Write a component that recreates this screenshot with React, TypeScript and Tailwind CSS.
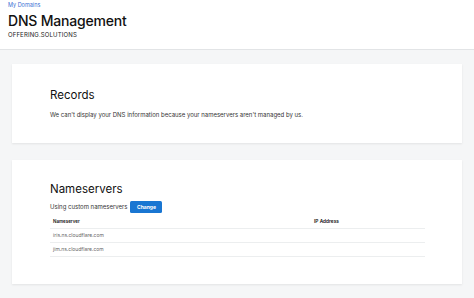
import React from "react";

export default function App() {
  return (
    <div className="min-h-[298px] bg-[#f5f6f7] font-['Inter',sans-serif] text-[#111]">
      <header className="h-[50px] bg-white pl-[8px] pt-[2px] border-b border-[#e2e4e6]">
        <div className="text-[5.5px] leading-[7px] text-[#3b6fd4]">My Domains</div>
        <h1 className="text-[14px] leading-[20px] mt-[2px] font-medium tracking-[-0.2px]">DNS Management</h1>
        <div className="text-[6px] leading-[7px] uppercase tracking-[0.15px] text-[#222]">offering.solutions</div>
      </header>
      <main className="px-[12px] pt-[14px] pb-[12px] flex flex-col gap-[17px]">
        <section className="h-[79px] bg-white shadow-[0_1px_2px_rgba(0,0,0,0.08)] pl-[38px] pt-[24px]">
          <h2 className="text-[11.5px] leading-[15px] font-normal">Records</h2>
          <p className="mt-[8px] text-[6px] leading-[7px] text-[#333]">
            We can't display your DNS information because your nameservers aren't managed by us.
          </p>
        </section>
        <section className="h-[124px] bg-white shadow-[0_1px_2px_rgba(0,0,0,0.08)] pl-[38px] pr-[38px] pt-[22px]">
          <h2 className="text-[11.5px] leading-[15px] font-normal">Nameservers</h2>
          <div className="mt-[4px] flex items-center gap-[3px]">
            <span className="text-[6px] leading-[8px] text-[#333]">Using custom nameservers</span>
            <button className="h-[12px] w-[32px] rounded-[1.5px] bg-[#1976d2] text-white text-[5px] font-bold leading-[12px]">
              Change
            </button>
          </div>
          <table className="mt-[2px] w-[375px] border-collapse text-[5px] leading-[7px]">
            <thead>
              <tr className="border-b border-[#eceeef]">
                <th className="text-left text-[4.5px] font-semibold pl-[3px] py-[3px] w-[264px]">Nameserver</th>
                <th className="text-left text-[4.8px] font-semibold py-[3px]">IP Address</th>
              </tr>
            </thead>
            <tbody className="text-[#666]">
              <tr className="border-b border-[#eceeef]">
                <td className="pl-[3px] py-[3px]">iris.ns.cloudflare.com</td>
                <td></td>
              </tr>
              <tr className="border-b border-[#eceeef]">
                <td className="pl-[3px] py-[3px]">jim.ns.cloudflare.com</td>
                <td></td>
              </tr>
            </tbody>
          </table>
        </section>
      </main>
    </div>
  );
}
